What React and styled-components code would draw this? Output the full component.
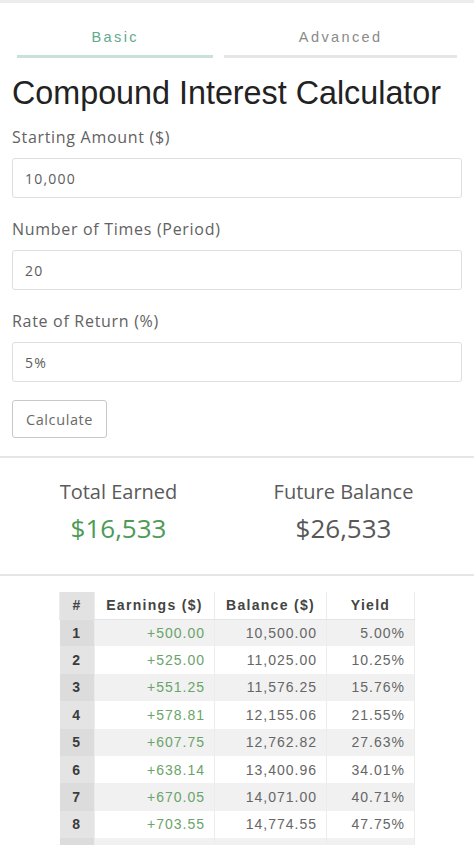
import React from "react";
import styled, { createGlobalStyle } from "styled-components";

const GlobalStyle = createGlobalStyle`
  * { box-sizing: border-box; }
  html, body { margin: 0; padding: 0; background: #fff; }
  body { font-family: "Open Sans", "Noto Sans", sans-serif; color: #444; }
`;

const Page = styled.div`
  width: 474px;
  border-top: 3px solid #ececec;
  overflow: hidden;
`;

const Form = styled.div`
  padding: 0 12px;
`;

const Tabs = styled.div`
  display: flex;
  gap: 11px;
  margin: 24px 5px 0;
`;

const Tab = styled.div`
  flex: 1 1 auto;
  text-align: center;
  font-family: "Liberation Sans", Arial, sans-serif;
  font-size: 14.5px;
  line-height: 20px;
  letter-spacing: 2.4px;
  padding-bottom: 8px;
  color: ${(p) => (p.$active ? "#62a98d" : "#8a8a8a")};
  border-bottom: 3px solid ${(p) => (p.$active ? "#c9e1d7" : "#e6e6e6")};
`;

const Title = styled.h1`
  margin: 17px 0 16px;
  font-family: "Liberation Sans", Arial, sans-serif;
  font-weight: 400;
  font-size: 32.3px;
  line-height: 36px;
  color: #222;
  white-space: nowrap;
`;

const Field = styled.div`
  display: flex;
  flex-direction: column;
  gap: 11px;
  margin-bottom: 21px;
`;

const Label = styled.label`
  font-size: 16px;
  letter-spacing: 0.7px;
  line-height: 20px;
  color: #626262;
`;

const Input = styled.div`
  height: 40px;
  border: 1px solid #dedede;
  border-radius: 3px;
  padding: 0 12px;
  display: flex;
  align-items: center;
  font-size: 14px;
  letter-spacing: 1.2px;
  color: #5c5c5c;
`;

const Button = styled.button`
  margin-top: -3px;
  height: 38px;
  width: 95px;
  border: 1px solid #c8c8c8;
  border-radius: 3px;
  background: #fff;
  font-family: "Open Sans", "Noto Sans", sans-serif;
  font-size: 14.5px;
  letter-spacing: 0.6px;
  color: #6a6a6a;
  padding: 0;
`;

const Divider = styled.div`
  height: 2px;
  background: #e6e6e6;
  margin-top: ${(p) => p.$top}px;
`;

const Stats = styled.div`
  display: grid;
  grid-template-columns: 225px 225px;
  padding: 21px 0 29px 6px;
`;

const Stat = styled.div`
  display: flex;
  flex-direction: column;
  align-items: center;
  gap: 6px;
`;

const StatLabel = styled.div`
  font-size: 20px;
  line-height: 26px;
  color: #5a5a5a;
`;

const StatValue = styled.div`
  font-size: 26px;
  line-height: 34px;
  color: ${(p) => (p.$green ? "#4e9a56" : "#585858")};
`;

const Table = styled.table`
  margin: 16px auto 0;
  border-collapse: collapse;
  font-family: "Liberation Sans", Arial, sans-serif;
  font-size: 14px;
  letter-spacing: 1px;
`;

const Th = styled.th`
  height: 27px;
  width: ${(p) => p.$w}px;
  font-weight: 700;
  letter-spacing: 1.3px;
  color: #444;
  text-align: center;
  background: ${(p) => (p.$index ? "#e2e2e2" : "#fff")};
  border-left: 1px solid #ececec;
  border-right: 1px solid #ececec;
  border-bottom: 1px solid #e4e4e4;
  padding: 0;
`;

const Row = styled.tr`
  background: ${(p) => (p.$odd ? "#f1f1f1" : "#fff")};
`;

const Td = styled.td`
  height: 27.4px;
  padding: 0 9px 0 0;
  text-align: right;
  color: ${(p) => (p.$green ? "#6aa46a" : "#666")};
  border-left: 1px solid #ececec;
  border-right: 1px solid #ececec;
`;

const IndexTd = styled.td`
  height: 27.4px;
  padding: 0;
  text-align: center;
  font-weight: 700;
  color: #3c3c3c;
  background: ${(p) => (p.$odd ? "#dcdcdc" : "#e4e4e4")};
`;

const fmt = (n) =>
  n.toLocaleString("en-US", { minimumFractionDigits: 2, maximumFractionDigits: 2 });

const rows = [];
let bal = 10000;
for (let i = 1; i <= 20; i++) {
  const earn = bal * 0.05;
  bal = bal + earn;
  rows.push({ i, earn, bal, yld: (bal / 10000 - 1) * 100 });
}

export default function App() {
  return (
    <Page>
      <GlobalStyle />
      <Form>
        <Tabs>
          <Tab $active>Basic</Tab>
          <Tab>Advanced</Tab>
        </Tabs>
        <Title>Compound Interest Calculator</Title>
        <Field>
          <Label>Starting Amount ($)</Label>
          <Input>10,000</Input>
        </Field>
        <Field>
          <Label>Number of Times (Period)</Label>
          <Input>20</Input>
        </Field>
        <Field>
          <Label>Rate of Return (%)</Label>
          <Input>5%</Input>
        </Field>
        <Button>Calculate</Button>
      </Form>
      <Divider $top={18} />
      <Stats>
        <Stat>
          <StatLabel>Total Earned</StatLabel>
          <StatValue $green>$16,533</StatValue>
        </Stat>
        <Stat>
          <StatLabel>Future Balance</StatLabel>
          <StatValue>$26,533</StatValue>
        </Stat>
      </Stats>
      <Divider $top={0} />
      <Table>
        <thead>
          <tr>
            <Th $index $w={35}>#</Th>
            <Th $w={120}>Earnings ($)</Th>
            <Th $w={112}>Balance ($)</Th>
            <Th $w={88}>Yield</Th>
          </tr>
        </thead>
        <tbody>
          {rows.map((r) => (
            <Row key={r.i} $odd={r.i % 2 === 1}>
              <IndexTd $odd={r.i % 2 === 1}>{r.i}</IndexTd>
              <Td $green>+{fmt(r.earn)}</Td>
              <Td>{fmt(r.bal)}</Td>
              <Td>{fmt(r.yld)}%</Td>
            </Row>
          ))}
        </tbody>
      </Table>
    </Page>
  );
}
